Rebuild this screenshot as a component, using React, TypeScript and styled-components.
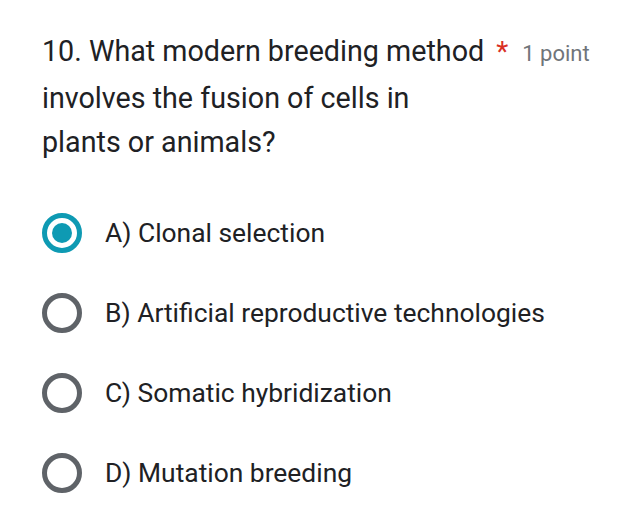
import React from "react";
import styled, { createGlobalStyle } from "styled-components";

const GlobalStyle = createGlobalStyle`
  html, body {
    margin: 0;
    padding: 0;
    background: #ffffff;
  }
  body {
    font-family: Roboto, "Noto Sans", sans-serif;
    -webkit-font-smoothing: antialiased;
  }
`;

const OPTIONS = [
  "A) Clonal selection",
  "B) Artificial reproductive technologies",
  "C) Somatic hybridization",
  "D) Mutation breeding",
];

const Card = styled.div`
  width: 618px;
  height: 506px;
  box-sizing: border-box;
  padding: 29px 20px 0 42px;
  overflow: hidden;
`;

const Title = styled.div`
  font-size: 28.7px;
  line-height: 44px;
  color: #202124;
`;

const Required = styled.span`
  color: #d93025;
  margin-left: 12px;
  font-size: 28px;
`;

const Points = styled.span`
  margin-left: 14px;
  font-size: 22px;
  color: #70757a;
  white-space: nowrap;
`;

const OptionList = styled.div`
  display: flex;
  flex-direction: column;
  margin-top: 29px;
`;

const OptionRow = styled.div`
  display: flex;
  align-items: center;
  height: 80px;
`;

const Radio = styled.div<{ $checked: boolean }>`
  width: 40px;
  height: 40px;
  box-sizing: border-box;
  border-radius: 50%;
  border: 5px solid ${(p) => (p.$checked ? "#0e9ab3" : "#5f6368")};
  display: flex;
  align-items: center;
  justify-content: center;
  flex-shrink: 0;
`;

const Dot = styled.div`
  width: 20px;
  height: 20px;
  border-radius: 50%;
  background: #0e9ab3;
`;

const Label = styled.span`
  margin-left: 23px;
  font-size: 26.4px;
  color: #202124;
`;

export default function App() {
  return (
    <>
      <GlobalStyle />
      <Card>
        <Title>
          10. What modern breeding method<Required>*</Required>
          <Points>1 point</Points>
          <br />
          involves the fusion of cells in
          <br />
          plants or animals?
        </Title>
        <OptionList>
          {OPTIONS.map((o, i) => (
            <OptionRow key={o}>
              <Radio $checked={i === 0}>{i === 0 && <Dot />}</Radio>
              <Label>{o}</Label>
            </OptionRow>
          ))}
        </OptionList>
      </Card>
    </>
  );
}
